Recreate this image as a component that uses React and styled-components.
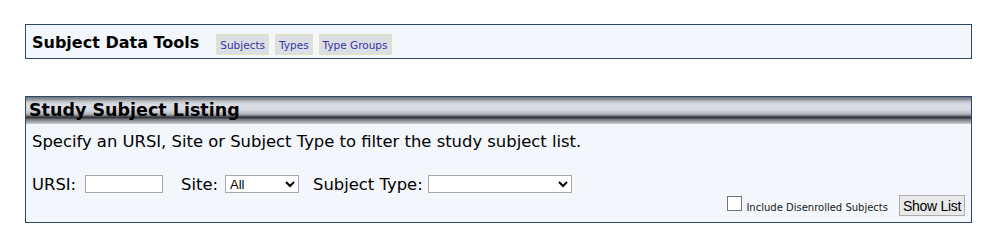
import React from 'react';
import styled, {createGlobalStyle} from 'styled-components';

const Global = createGlobalStyle`
  body {
    margin: 0;
    background: #ffffff;
    font-family: Verdana, 'DejaVu Sans', sans-serif;
  }
`;

const Page = styled.div`
  padding: 24px 24px 0 25px;
`;

const ToolBar = styled.div`
  display: flex;
  align-items: center;
  height: 33px;
  padding: 0 6px;
  border: 1px solid #2c4866;
  background: #f3f6fb;
`;

const ToolTitle = styled.h1`
  margin: 2px 17px 0 0;
  font-size: 16px;
  font-weight: bold;
  color: #000;
`;

const ToolLink = styled.a`
  display: inline-block;
  margin: 5px 6px 0 0;
  padding: 4px 3px 3px;
  font-size: 10.5px;
  color: #36369e;
  background: #dcdee6;
  border: 1px solid #e6e3b6;
  text-decoration: none;
`;

const Panel = styled.section`
  margin-top: 37px;
  border: 1px solid #2c4866;
  background: #f3f6fb;
`;

const PanelHead = styled.h2`
  margin: 0;
  height: 27px;
  padding: 0 3px;
  font-size: 17.5px;
  font-weight: bold;
  line-height: 27px;
  color: #000;
  background: linear-gradient(
    to bottom,
    #6e737c 0px,
    #9a9ea6 3px,
    #c9cbd3 5px,
    #dcdde4 8px,
    #d8d9e0 13px,
    #b4b6bd 17px,
    #6a6d74 19px,
    #2f3136 20px,
    #3a3c41 21px,
    #6c6f76 22px,
    #93969d 24px,
    #b7bac1 26px,
    #cfd2d8 27px
  );
`;

const PanelBody = styled.div`
  padding: 8px 6px 6px;
`;

const Intro = styled.p`
  margin: 0 0 24px;
  font-size: 16.4px;
  line-height: 19px;
  color: #000;
`;

const FormRow = styled.div`
  display: flex;
  align-items: center;
  height: 18px;
  font-size: 16.4px;
  color: #000;
`;

const Label = styled.label`
  width: ${p => p.w}px;
  flex: none;
  margin-left: ${p => p.lead || 0}px;
`;

const TextInput = styled.input`
  box-sizing: border-box;
  width: 78px;
  height: 18px;
  padding: 1px 2px;
  border: 1px solid #a9a9a9;
  background: #fff;
`;

const Select = styled.select`
  box-sizing: border-box;
  width: ${p => p.w}px;
  height: 18px;
  padding: 0;
  font-size: 13px;
  font-family: 'Liberation Sans', Arial, sans-serif;
  border: 1px solid #a9a9a9;
  background: #fff;
  border-radius: 0;
`;

const Bottom = styled.div`
  display: flex;
  justify-content: flex-end;
  align-items: center;
  margin-top: 2px;
  padding-right: 0;
`;

const Check = styled.input`
  width: 15px;
  height: 15px;
  margin: 0 4px 0 0;
  appearance: none;
  border: 1px solid #767676;
  background: #fff;
  position: relative;
  top: -2px;
`;

const CheckLabel = styled.span`
  font-size: 10px;
  color: #222;
  margin-right: 11px;
  position: relative;
  top: 2px;
`;

const Button = styled.button`
  box-sizing: border-box;
  width: 66px;
  height: 21px;
  padding: 0;
  font-family: 'Liberation Sans', Arial, sans-serif;
  font-size: 14px;
  letter-spacing: -0.3px;
  color: #000;
  background: #e9e9e9;
  border: 1px solid #adadad;
  border-radius: 0;
`;

export default function App() {
  return (
    <Page>
      <Global />
      <ToolBar>
        <ToolTitle>Subject Data Tools</ToolTitle>
        <ToolLink href="#">Subjects</ToolLink>
        <ToolLink href="#">Types</ToolLink>
        <ToolLink href="#">Type Groups</ToolLink>
      </ToolBar>
      <Panel>
        <PanelHead>Study Subject Listing</PanelHead>
        <PanelBody>
          <Intro>Specify an URSI, Site or Subject Type to filter the study subject list.</Intro>
          <FormRow>
            <Label w={53}>URSI:</Label>
            <TextInput type="text" />
            <Label w={44} lead={18}>Site:</Label>
            <Select w={74} defaultValue="All">
              <option>All</option>
            </Select>
            <Label w={115} lead={14}>Subject Type:</Label>
            <Select w={144}>
              <option></option>
            </Select>
          </FormRow>
          <Bottom>
            <Check type="checkbox" />
            <CheckLabel>Include Disenrolled Subjects</CheckLabel>
            <Button>Show List</Button>
          </Bottom>
        </PanelBody>
      </Panel>
    </Page>
  );
}
